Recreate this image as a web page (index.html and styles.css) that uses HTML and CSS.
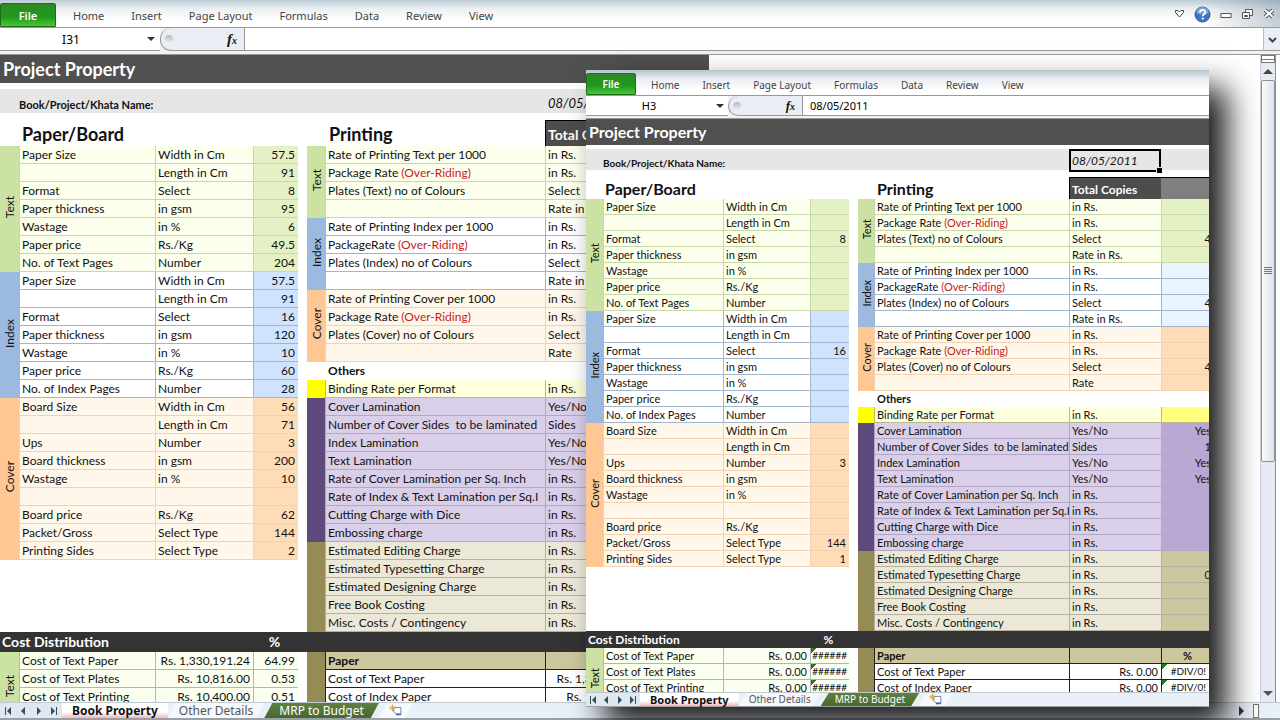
FILE: index.html
```
<!DOCTYPE html>
<html lang="en">
<head>
    <meta charset="UTF-8">
    <meta name="viewport" content="width=device-width, initial-scale=1.0">
    <title>Book Property</title>
    <link rel="stylesheet" href="styles.css">
</head>
<body>

<div class="book back">
    <nav class="ribbon">
        <button class="file">File</button>
        <a href="#">Home</a>
        <a href="#">Insert</a>
        <a href="#">Page Layout</a>
        <a href="#">Formulas</a>
        <a href="#">Data</a>
        <a href="#">Review</a>
        <a href="#">View</a>
        <div class="window-buttons">
            <button aria-label="Minimize ribbon"><svg width="11" height="10" viewBox="0 0 11 10"><path d="M1.500 1.500h2.500l1.500 1.500 1.500-1.500h2.500v2L5.500 8 1.500 3.500z" fill="#fff" stroke="#444"/></svg></button>
            <button aria-label="Help"><svg width="17" height="17" viewBox="0 0 17 17"><circle cx="8.500" cy="8.500" r="7.500" fill="#3f74c4" stroke="#2b559b"/><path d="M2 7a6.500 6 0 0 1 13 0q-6 3-13 0z" fill="#7ba5e0"/><path d="M6 6.500c0-3.500 5.200-3.500 5.200-.3 0 2-2.400 2-2.400 4" fill="none" stroke="#fff" stroke-width="1.800"/><circle cx="8.800" cy="12.600" r="1.100" fill="#fff"/></svg></button>
            <button aria-label="Minimize"><svg width="12" height="10" viewBox="0 0 12 10"><rect x="1" y="4.500" width="10" height="4" fill="#fff" stroke="#555"/></svg></button>
            <button aria-label="Restore"><svg width="13" height="12" viewBox="0 0 13 12"><path d="M4.500 1.500h7v6h-7z" fill="#fff" stroke="#555"/><path d="M1.500 4.500h7v6h-7z" fill="#fff" stroke="#555"/><path d="M3.500 7.500h3v1h-3z" fill="none" stroke="#555"/></svg></button>
            <button aria-label="Close"><svg width="12" height="12" viewBox="0 0 12 12"><path d="M2 2l8 7M10 2L2 9" stroke="#4b5a68" stroke-width="4"/><path d="M2 2l8 7M10 2L2 9" stroke="#fff" stroke-width="2"/></svg></button>
        </div>
    </nav>
    <div class="formula-bar">
        <input class="name-box" aria-label="Name box" value="I31">
        <button class="name-arrow" aria-label="Open name list"></button>
        <div class="fx"><span class="knob"></span><i>f<small>x</small></i></div>
        <input class="formula" aria-label="Formula" value="">
        <button class="expand" aria-label="Expand formula bar"><svg width="9" height="8" viewBox="0 0 9 8"><path d="M1 2l3.500 3.500L8 2" fill="none" stroke="#444" stroke-width="2"/></svg></button>
    </div>
    <div class="work">
        <main class="sheet" data-sheet="back"></main>
        <div class="vscroll">
            <button class="split" aria-label="Split"></button>
            <button class="up" aria-label="Scroll up"></button>
            <div class="thumb"></div>
            <button class="down" aria-label="Scroll down"></button>
        </div>
    </div>
    <footer class="tabs">
        <div class="tab-nav">
            <button aria-label="First sheet"><svg viewBox="0 0 8 8"><path d="M1 0h1v8H1zM7 0v8L3 4z"/></svg></button>
            <button aria-label="Previous sheet"><svg viewBox="0 0 8 8"><path d="M6 0v8L2 4z"/></svg></button>
            <button aria-label="Next sheet"><svg viewBox="0 0 8 8"><path d="M2 0v8l4-4z"/></svg></button>
            <button aria-label="Last sheet"><svg viewBox="0 0 8 8"><path d="M6 0h1v8H6zM1 0v8l4-4z"/></svg></button>
        </div>
        <a href="#" class="tab active">Book Property</a>
        <a href="#" class="tab">Other Details</a>
        <a href="#" class="tab mrp">MRP to Budget</a>
        <button class="new-tab" aria-label="Insert sheet"><svg viewBox="0 0 16 14"><path d="M5.500 3.500h8v8h-5l-3-3z" fill="#fff" stroke="#5a7bb5"/><path d="M8 11.500h5.500" stroke="#3d5f9c" stroke-width="2"/><path d="M4 0v8M0 4h8M1.500 1.500l5 5M6.500 1.500l-5 5" stroke="#e0a030"/></svg></button>
        <div class="hscroll"><button class="right" aria-label="Scroll right"></button><span class="hsplit"></span></div>
    </footer>
</div>

<div class="book front">
    <nav class="ribbon">
        <button class="file">File</button>
        <a href="#">Home</a>
        <a href="#">Insert</a>
        <a href="#">Page Layout</a>
        <a href="#">Formulas</a>
        <a href="#">Data</a>
        <a href="#">Review</a>
        <a href="#">View</a>
    </nav>
    <div class="formula-bar">
        <input class="name-box" aria-label="Name box" value="H3">
        <button class="name-arrow" aria-label="Open name list"></button>
        <div class="fx"><span class="knob"></span><i>f<small>x</small></i></div>
        <input class="formula" aria-label="Formula" value="08/05/2011">
    </div>
    <div class="work">
        <main class="sheet" data-sheet="front"></main>
    </div>
    <footer class="tabs">
        <div class="tab-nav">
            <button aria-label="First sheet"><svg viewBox="0 0 8 8"><path d="M1 0h1v8H1zM7 0v8L3 4z"/></svg></button>
            <button aria-label="Previous sheet"><svg viewBox="0 0 8 8"><path d="M6 0v8L2 4z"/></svg></button>
            <button aria-label="Next sheet"><svg viewBox="0 0 8 8"><path d="M2 0v8l4-4z"/></svg></button>
            <button aria-label="Last sheet"><svg viewBox="0 0 8 8"><path d="M6 0h1v8H6zM1 0v8l4-4z"/></svg></button>
        </div>
        <a href="#" class="tab active">Book Property</a>
        <a href="#" class="tab">Other Details</a>
        <a href="#" class="tab mrp">MRP to Budget</a>
        <button class="new-tab" aria-label="Insert sheet"><svg viewBox="0 0 16 14"><path d="M5.500 3.500h8v8h-5l-3-3z" fill="#fff" stroke="#5a7bb5"/><path d="M8 11.500h5.500" stroke="#3d5f9c" stroke-width="2"/><path d="M4 0v8M0 4h8M1.500 1.500l5 5M6.500 1.500l-5 5" stroke="#e0a030"/></svg></button>
    </footer>
</div>

<script src="script.js"></script>
</body>
</html>
```
FILE: styles.css
```
* {
    box-sizing: border-box;
}
body {
    margin: 0;
    background: #fff;
    overflow: hidden;
}
button, input {
    font: inherit;
    border: none;
    background: none;
    padding: 0;
    margin: 0;
    min-width: 0;
}
a {
    color: inherit;
    text-decoration: none;
}

/* sizes of the full window, the small one overrides them */
.book {
    --row: 18px;
    --text: 12px;
    --ui: 12px;
    --menu: 11px;
    --title: 18px;
    --strip: 19px;
    --label: 136px;
    --unit: 98px;
    --value: 45px;
    --gap: 9px;
    --label2: 220px;
    --unit2: 104px;
    --value2: 60px;
    display: flex;
    flex-direction: column;
    background: #fff;
    color: #111;
    font-family: Lato, sans-serif;
    font-size: var(--text);
    overflow: hidden;
}
.back {
    height: 100vh;
}
.front {
    --row: 16px;
    --text: 11px;
    --ui: 11px;
    --menu: 10px;
    --title: 16px;
    --strip: 17px;
    --label: 120px;
    --unit: 87px;
    --value: 39px;
    --label2: 195px;
    --unit2: 92px;
    --value2: 53px;
    position: absolute;
    left: 586px;
    top: 70px;
    width: 623px;
    height: 637px;
    box-shadow: 18px 18px 30px rgba(0, 0, 0, 0.9);
}

/* ribbon */
.ribbon {
    display: flex;
    align-items: flex-end;
    flex: none;
    height: 28px;
    padding-right: 5px;
    background: linear-gradient(90deg, transparent 94%, rgba(110, 130, 150, 0.4)), linear-gradient(#bccdd5, #eef1f4 35%, #fff 80%);
    border-bottom: 1px solid #999;
    font-family: "Noto Sans", sans-serif;
    font-size: var(--menu);
    color: #444;
}
.ribbon a {
    line-height: 23px;
    padding: 0 14px 0 13px;
    white-space: nowrap;
}
.file {
    width: 56px;
    height: 24px;
    margin-right: 4px;
    border-radius: 2px 2px 0 0;
    background: linear-gradient(#2c8a24, #1f9a1c 60%, #4cc43c);
    border: 1px solid #1c6e1a;
    color: #fff;
    font-weight: 600;
}
.window-buttons {
    display: flex;
    align-items: center;
    gap: 9px;
    height: 26px;
    margin-left: auto;
}
.window-buttons button, .window-buttons svg {
    display: block;
}
.front .ribbon {
    height: 26px;
    background: linear-gradient(#b5c3cc, #e9eef3 35%, #fff 80%);
}
.front .file {
    width: 50px;
    height: 22px;
    margin-right: 3px;
}
.front .ribbon a {
    line-height: 20px;
    padding: 0 11px 0 12px;
}

/* formula bar */
.formula-bar {
    display: flex;
    flex: none;
    height: 27px;
    padding-bottom: 3px;
    background: #f0f1f3;
    border-bottom: 1px solid #999;
    font-family: "Noto Sans", sans-serif;
    font-size: var(--ui);
}
.formula-bar > * {
    background: #fff;
    border-bottom: 1px solid #999;
}
.name-box {
    width: 142px;
    text-align: center;
}
.name-arrow {
    width: 18px;
    display: flex;
    align-items: center;
    justify-content: center;
}
.name-arrow::before {
    content: "";
    border: 4px solid transparent;
    border-top-color: #333;
    border-bottom: none;
}
.fx {
    display: flex;
    align-items: center;
    justify-content: space-between;
    width: 85px;
    padding: 0 7px 0 4px;
    background: #eaeef4;
    border-left: 1px solid #999;
    border-right: 1px solid #999;
    border-radius: 11px 0 0 11px;
    font: bold 15px "Liberation Serif", serif;
}
.fx small {
    font-size: 10px;
}
.knob {
    width: 8px;
    height: 8px;
    border-radius: 4px;
    background: linear-gradient(#b4b9bf, #eaeef4);
}
.formula {
    flex: 1;
    padding-left: 7px;
}
.expand {
    width: 17px;
    background: #eaeef4;
    border-left: 1px solid #bbb;
}
.front .formula-bar {
    height: 23px;
    padding-bottom: 2px;
}
.front .name-box {
    width: 126px;
}
.front .name-arrow {
    width: 16px;
}
.front .fx {
    width: 75px;
    font-size: 13px;
}

/* sheet */
.work {
    display: flex;
    flex: 1;
    min-height: 0;
}
.sheet {
    flex: 1;
    min-width: 0;
    overflow: hidden;
}
.columns {
    display: flex;
    align-items: flex-start;
    gap: var(--gap);
    width: max-content;
}
.fill {
    width: calc(var(--strip) * 2 + var(--label) + var(--unit) + var(--value) + var(--gap) + var(--label2) + var(--unit2) + var(--value2) - 1px);
}
.sheet h1 {
    margin: 0 0 6px;
    padding-left: 3px;
    height: 28px;
    line-height: 28px;
    background: #505050;
    color: #fff;
    font-size: var(--title);
}
.khata {
    display: flex;
    height: 24px;
    margin-bottom: 7px;
    background: #e6e6e6;
    line-height: 32px;
}
.khata b {
    width: calc(var(--strip) * 2 + var(--label) + var(--unit) + var(--value) + var(--gap) + var(--label2) - 1px);
    padding-left: var(--strip);
    font-size: 11px;
}
.khata i {
    width: var(--unit2);
    padding-left: 3px;
    line-height: 28px;
    font-size: 13px;
}
.heads {
    display: flex;
    height: 26px;
    line-height: 28px;
}
.heads h2 {
    margin: 0;
    font-size: var(--title);
}
.heads h2:first-child {
    width: calc(var(--strip) + var(--label) + var(--unit) + var(--value) + var(--gap));
    padding-left: 22px;
}
.heads h2:nth-child(2) {
    width: calc(var(--strip) + var(--label2) - 1px);
    padding-left: 22px;
}
.heads b {
    width: var(--unit2);
    padding-left: 2px;
    background: #4d4d4d;
    border: solid #000;
    border-width: 1px 0 0 1px;
    color: #fff;
    font-size: 14px;
}
.heads span {
    width: var(--value2);
    background: #7f7f7f;
    border-top: 1px solid #000;
}
.front h1 {
    height: 26px;
    line-height: 26px;
    margin-bottom: 4px;
}
.front .khata {
    height: 21px;
    line-height: 28px;
    margin-bottom: 7px;
}
.front .khata b {
    font-size: 10px;
}
.front .khata i {
    height: 23px;
    padding-left: 1px;
    line-height: 20px;
    font-size: 12px;
    border: 2px solid #000;
    position: relative;
}
.front .khata i::after {
    content: "";
    position: absolute;
    right: -3px;
    bottom: -3px;
    width: 5px;
    height: 5px;
    background: #000;
    border: solid #e6e6e6;
    border-width: 1px 0 0 1px;
}
.front .heads {
    height: 22px;
    line-height: 24px;
}
.front .heads h2 {
    padding-left: 19px;
}
.front .heads b {
    font-size: 12px;
}

table {
    table-layout: fixed;
    border-spacing: 0;
    flex: none;
}
.left {
    width: calc(var(--strip) + var(--label) + var(--unit) + var(--value));
}
.right-side {
    width: calc(var(--strip) + var(--label2) + var(--unit2) + var(--value2) - 1px);
}
.c-strip { width: var(--strip); }
.left .c-label { width: var(--label); }
.left .c-unit { width: var(--unit); }
.left .c-value { width: var(--value); }
.right-side .c-strip { width: calc(var(--strip) - 1px); }
.right-side .c-label { width: var(--label2); }
.right-side .c-unit { width: var(--unit2); }
.right-side .c-value { width: var(--value2); }

td, th {
    height: var(--row);
    padding: 0 3px 0 2px;
    line-height: calc(var(--row) - 1px);
    font-weight: normal;
    text-align: left;
    white-space: pre;
    overflow: hidden;
    background: var(--light);
    border: solid var(--line);
    border-width: 0 0 1px 1px;
}
td.num {
    text-align: right;
    background: var(--mid);
}
th.strip {
    padding: 0;
    background: var(--dark);
    border: none;
    text-align: center;
}
.strip span {
    display: inline-block;
    writing-mode: vertical-rl;
    transform: rotate(180deg);
    line-height: var(--strip);
}
.red {
    color: #c8201c;
}
.green { --light: #fbffec; --mid: #e4f1c4; --dark: #cce2a2; --line: #c8d9a8; }
.blue { --light: #fff; --mid: #cfe3fd; --dark: #9cb9df; --line: #a3b5c8; }
.orange { --light: #fff8ea; --mid: #ffdcb8; --dark: #ffc794; --line: #f2d2b0; }
.yellow { --light: #feffdc; --mid: #ffff80; --dark: #ff0; --line: #b9b98a; }
.purple { --light: #d9cfe8; --mid: #b8a8d3; --dark: #5d497b; --line: #b3a7c7; }
.olive { --light: #ebe8d8; --mid: #cdc7a0; --dark: #948c54; --line: #b5b1a0; }
.plain { --light: #fff; --mid: #fff; --dark: #fff; --line: #fff; }
.cost { --light: #fafff0; --mid: #fafff0; --dark: #cce2a2; --line: #b5b5b5; }
.paper { --light: #fff; --mid: #fff; --dark: #948c54; --line: #222; }
.front .right-side .blue { --mid: #e8f4ff; }
.plain td {
    font-weight: bold;
}
.paper .paper-head {
    background: #cdc7a0;
    font-weight: bold;
}
.paper .center {
    text-align: center;
}
.cost-bar {
    display: flex;
    height: 20px;
    line-height: 20px;
    padding-left: 2px;
    background: #333;
    color: #fff;
    font-size: 14px;
    font-weight: bold;
}
.cost-bar span:first-child {
    width: calc(var(--strip) + var(--label) + var(--unit) - 3px);
}
.cost-bar span:last-child {
    width: var(--value);
    text-align: center;
}
.front .cost-bar {
    height: 17px;
    line-height: 17px;
    font-size: 12px;
}
.paper .flag, .cost .flag {
    padding: 0 2px 0 0;
    background: linear-gradient(135deg, #1c7a28 4px, transparent 4px) var(--mid);
    font-size: 10px;
}
.paper .flag {
    padding-right: 8px;
}

/* scroll bars */
.vscroll {
    display: flex;
    flex-direction: column;
    align-items: stretch;
    width: 16px;
    margin-right: 4px;
    background: #e6ebf3;
    border-left: 1px solid #ccd2da;
    border-right: 1px solid #8a8f96;
}
.split {
    height: 8px;
    background: linear-gradient(#fff 3px, #777 3px, #777 4px, #fff 4px);
    border: 1px solid #777;
}
.up, .down {
    display: flex;
    align-items: center;
    justify-content: center;
    height: 17px;
}
.up::before, .down::before {
    content: "";
    border: 5px solid transparent;
    border-bottom-color: #444;
    border-top: none;
}
.down::before {
    border-top: 5px solid #555;
    border-bottom: none;
}
.thumb {
    height: 59%;
    display: flex;
    align-items: center;
    justify-content: center;
    background: linear-gradient(90deg, #fafbfd, #dde3ec);
    border: 1px solid #8b93a0;
    border-radius: 2px;
}
.thumb::before {
    content: "";
    width: 8px;
    height: 8px;
    background: repeating-linear-gradient(#777 0 1px, transparent 1px 2px);
}
.down {
    margin-top: auto;
}

/* sheet tabs */
.tabs {
    display: flex;
    flex: none;
    height: 18px;
    background: #e9f0f8;
    border-top: 1px solid #c0c8d2;
    border-bottom: 2px solid #9aa0a8;
    font-family: "Noto Sans", sans-serif;
    font-size: var(--ui);
}
.tab-nav {
    display: flex;
    align-items: center;
    justify-content: space-around;
    width: 62px;
    background: #dfe7f1;
}
.tab-nav svg {
    display: block;
    width: 8px;
    height: 8px;
    fill: #3c4a5c;
}
.tab {
    line-height: 15px;
    padding: 0 11px;
    color: #555;
    background: #f5f9fd;
    white-space: nowrap;
    clip-path: polygon(8px 0, 100% 0, calc(100% - 8px) 100%, 0 100%);
}
.tab.active {
    padding: 0 10px;
    background: linear-gradient(#fff 60%, #f7b5b5);
    clip-path: none;
    color: #111;
    font-weight: bold;
}
.tab.mrp {
    padding: 0 15px;
    background: linear-gradient(#5e8040, #48672e);
    color: #fff;
}
.new-tab {
    width: 34px;
    background: #f5f9fd;
    clip-path: polygon(8px 0, 100% 0, calc(100% - 8px) 100%, 0 100%);
}
.new-tab svg {
    display: block;
    width: 14px;
    height: 13px;
    margin: auto;
}
.hscroll {
    display: flex;
    align-items: center;
    justify-content: flex-end;
    gap: 9px;
    flex: 1;
    margin-right: 21px;
}
.right {
    border: 5px solid transparent;
    border-left-color: #333;
    border-right: none;
}
.hsplit {
    width: 6px;
    height: 14px;
    background: #fff;
    border: 1px solid #777;
}
.front .tabs {
    height: 15px;
    border-bottom-width: 1px;
    font-size: 10px;
}
.front .tab-nav {
    width: 54px;
}
.front .tab {
    line-height: 13px;
    padding: 0 10px;
}
.front .tab.active {
    font-size: 11px;
}
.front .tab.mrp {
    padding: 0 14px;
}
```
FILE: script.js
```
// [group, colour, rows of label, unit, value in the big window, value in the small one]
const paperGroups = [
    ['Text', 'green', [
        ['Paper Size', 'Width in Cm', '57.5', ''],
        ['', 'Length in Cm', '91', ''],
        ['Format', 'Select', '8', '8'],
        ['Paper thickness', 'in gsm', '95', ''],
        ['Wastage', 'in %', '6', ''],
        ['Paper price', 'Rs./Kg', '49.5', ''],
        ['No. of Text Pages', 'Number', '204', '']
    ]],
    ['Index', 'blue', [
        ['Paper Size', 'Width in Cm', '57.5', ''],
        ['', 'Length in Cm', '91', ''],
        ['Format', 'Select', '16', '16'],
        ['Paper thickness', 'in gsm', '120', ''],
        ['Wastage', 'in %', '10', ''],
        ['Paper price', 'Rs./Kg', '60', ''],
        ['No. of Index Pages', 'Number', '28', '']
    ]],
    ['Cover', 'orange', [
        ['Board Size', 'Width in Cm', '56', ''],
        ['', 'Length in Cm', '71', ''],
        ['Ups', 'Number', '3', '3'],
        ['Board thickness', 'in gsm', '200', ''],
        ['Wastage', 'in %', '10', ''],
        ['', '', '', ''],
        ['Board price', 'Rs./Kg', '62', ''],
        ['Packet/Gross', 'Select Type', '144', '144'],
        ['Printing Sides', 'Select Type', '2', '1']
    ]]
];

const over = '<span class="red">(Over-Riding)</span>';
const printingGroups = [
    ['Text', 'green', [
        ['Rate of Printing Text per 1000', 'in Rs.', '', ''],
        ['Package Rate ' + over, 'in Rs.', '', ''],
        ['Plates (Text) no of Colours', 'Select', '', '4'],
        ['', 'Rate in Rs.', '', '']
    ]],
    ['Index', 'blue', [
        ['Rate of Printing Index per 1000', 'in Rs.', '', ''],
        ['PackageRate ' + over, 'in Rs.', '', ''],
        ['Plates (Index) no of Colours', 'Select', '', '4'],
        ['', 'Rate in Rs.', '', '']
    ]],
    ['Cover', 'orange', [
        ['Rate of Printing Cover per 1000', 'in Rs.', '', ''],
        ['Package Rate ' + over, 'in Rs.', '', ''],
        ['Plates (Cover) no of Colours', 'Select', '', '4'],
        ['', 'Rate', '', '']
    ]],
    ['', 'plain', [['Others', '', '', '']]],
    ['', 'yellow', [['Binding Rate per Format', 'in Rs.', '', '']]],
    ['', 'purple', [
        ['Cover Lamination', 'Yes/No', '', 'Yes'],
        ['Number of Cover Sides  to be laminated', 'Sides', '', '1'],
        ['Index Lamination', 'Yes/No', '', 'Yes'],
        ['Text Lamination', 'Yes/No', '', 'Yes'],
        ['Rate of Cover Lamination per Sq. Inch', 'in Rs.', '', ''],
        ['Rate of Index &amp; Text Lamination per Sq.I', 'in Rs.', '', ''],
        ['Cutting Charge with Dice', 'in Rs.', '', ''],
        ['Embossing charge', 'in Rs.', '', '']
    ]],
    ['', 'olive', [
        ['Estimated Editing Charge', 'in Rs.', '', ''],
        ['Estimated Typesetting Charge', 'in Rs.', '', '0'],
        ['Estimated Designing Charge', 'in Rs.', '', ''],
        ['Free Book Costing', 'in Rs.', '', ''],
        ['Misc. Costs / Contingency', 'in Rs.', '', '']
    ]]
];

const costs = {
    back: [
        ['Cost of Text Paper', 'Rs. 1,330,191.24', '64.99'],
        ['Cost of Text Plates', 'Rs. 10,816.00', '0.53'],
        ['Cost of Text Printing', 'Rs. 10,400.00', '0.51']
    ],
    front: [
        ['Cost of Text Paper', 'Rs. 0.00', '######'],
        ['Cost of Text Plates', 'Rs. 0.00', '######'],
        ['Cost of Text Printing', 'Rs. 0.00', '######']
    ]
};
const paperCosts = {
    back: [
        ['Cost of Text Paper', 'Rs. 1,330,191.24', ''],
        ['Cost of Index Paper', 'Rs. 141,000.00', '']
    ],
    front: [
        ['Cost of Text Paper', 'Rs. 0.00', '#DIV/0!'],
        ['Cost of Index Paper', 'Rs. 0.00', '#DIV/0!']
    ]
};

const cols = '<colgroup><col class="c-strip"><col class="c-label"><col class="c-unit"><col class="c-value"></colgroup>';

function strip(name, span) {
    return `<th class="strip" rowspan="${span}"><span>${name}</span></th>`;
}

function groupTable(groups, side, which) {
    const valueAt = which === 'back' ? 2 : 3;
    const bodies = groups.map(([name, colour, rows]) => {
        const trs = rows.map((row, i) => `<tr>${i === 0 ? strip(name, rows.length) : ''}
            <td>${row[0]}</td><td>${row[1]}</td><td class="num">${row[valueAt]}</td></tr>`);
        return `<tbody class="${colour}">${trs.join('')}</tbody>`;
    });
    return `<table class="${side}">${cols}${bodies.join('')}</table>`;
}

function costRows(rows, flag) {
    return rows.map(row => `<td>${row[0]}</td><td class="num">${row[1]}</td><td class="num ${flag}">${row[2]}</td></tr>`);
}

document.querySelectorAll('.sheet').forEach(sheet => {
    const which = sheet.dataset.sheet;
    const flag = which === 'front' ? 'flag' : '';
    sheet.innerHTML = `
        <h1 class="fill">Project Property</h1>
        <div class="khata fill"><b>Book/Project/Khata Name:</b><i>08/05/2011</i></div>
        <div class="heads fill"><h2>Paper/Board</h2><h2>Printing</h2><b>Total Copies</b><span></span></div>
        <div class="columns">
            ${groupTable(paperGroups, 'left', which)}
            ${groupTable(printingGroups, 'right-side', which)}
        </div>
        <div class="cost-bar fill"><span>Cost Distribution</span><span>%</span></div>
        <div class="columns">
            <table class="left">${cols}<tbody class="cost">
                <tr>${strip('Text', 4)}${costRows(costs[which], flag).join('<tr>')}
                <tr><td></td><td></td><td></td></tr>
            </tbody></table>
            <table class="right-side">${cols}<tbody class="paper">
                <tr>${strip('', 3)}<td class="paper-head">Paper</td><td class="paper-head"></td><td class="paper-head center">%</td></tr>
                <tr>${costRows(paperCosts[which], flag).join('<tr>')}
            </tbody></table>
        </div>`;
});
```
